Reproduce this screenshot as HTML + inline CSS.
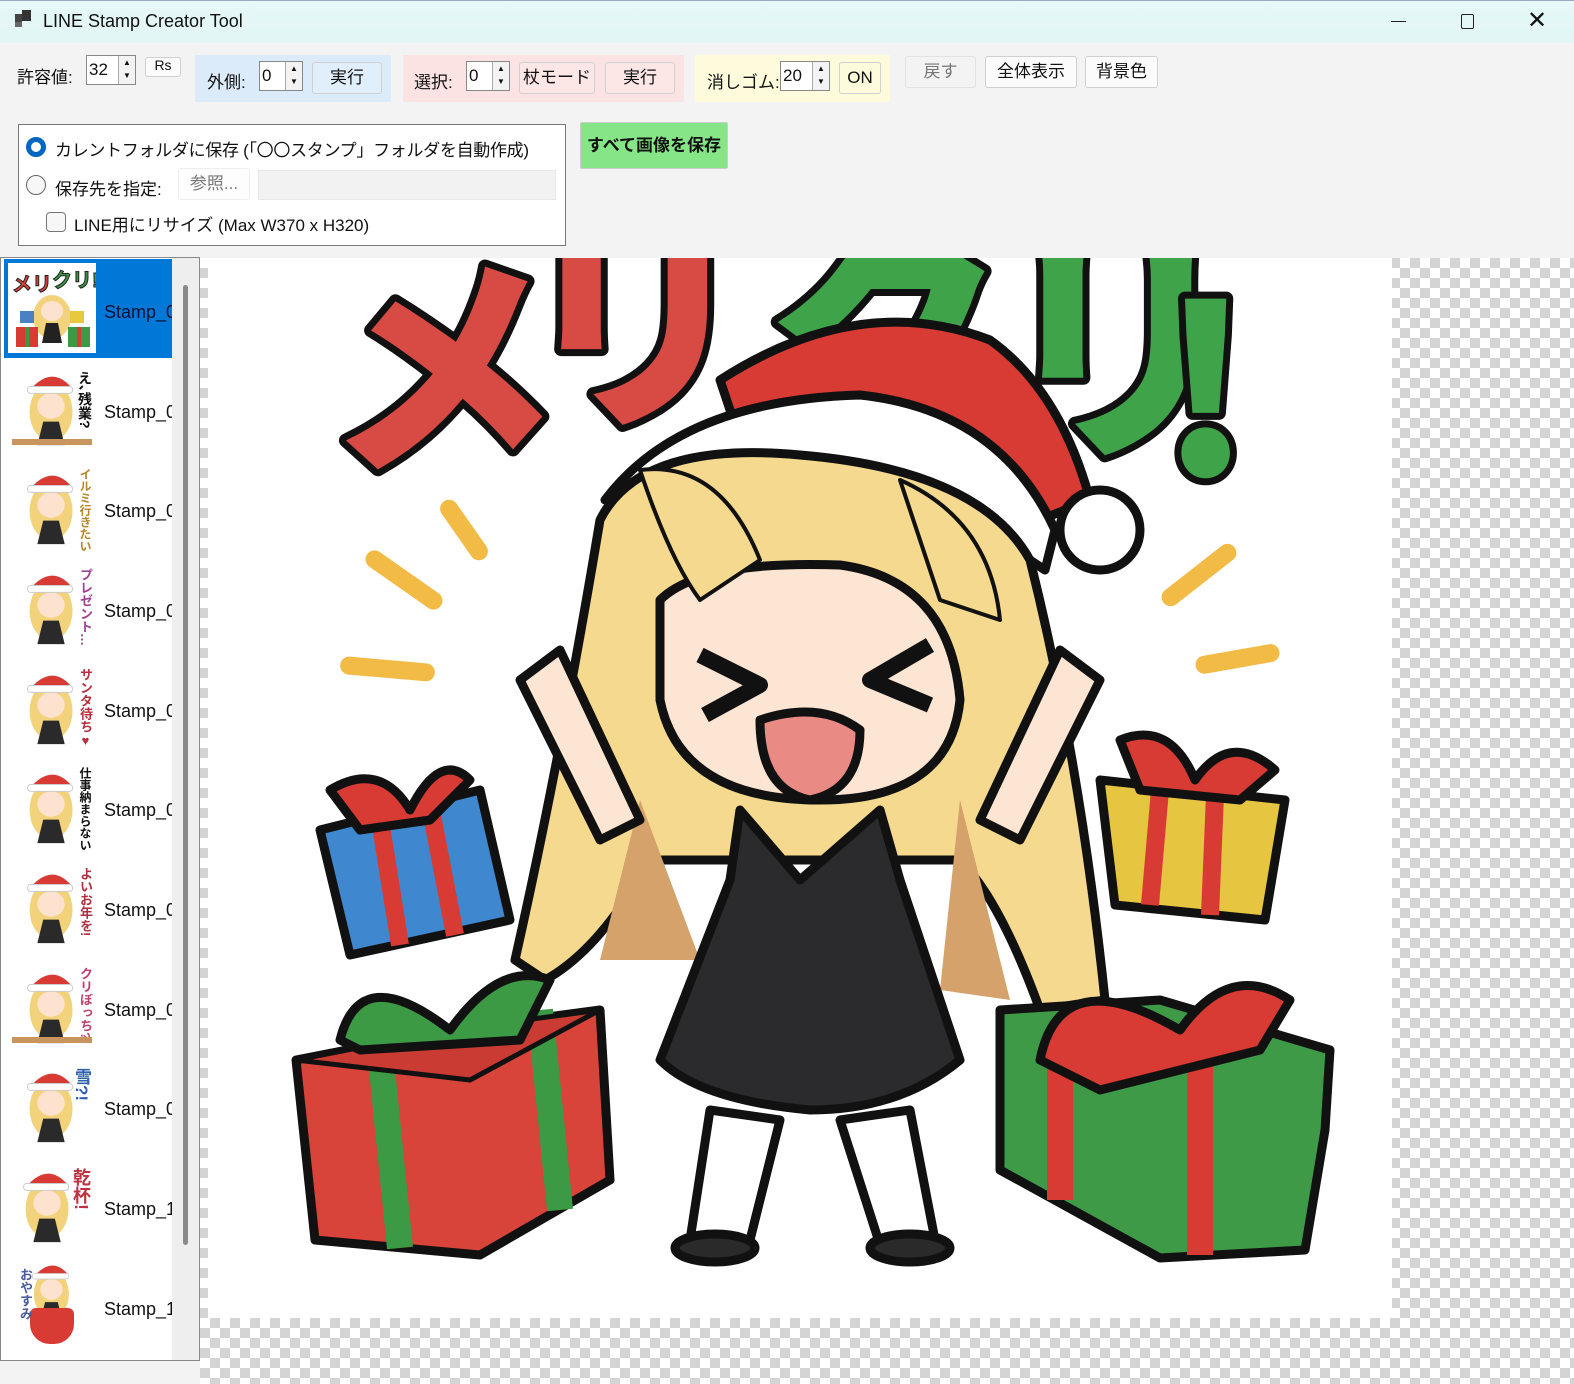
<!DOCTYPE html>
<html><head><meta charset="utf-8"><style>
*{box-sizing:border-box;margin:0;padding:0}
body{width:1574px;height:1384px;background:#f3f3f3;font-family:"Liberation Sans","Noto Sans CJK JP",sans-serif;position:relative;overflow:hidden;color:#111;font-size:17px}
.a{position:absolute}
.title{left:0;top:0;width:1574px;height:43px;background:linear-gradient(#e6f8f8,#e2f6f5);border-top:1px solid #9ab}
.btn{position:absolute;background:#fbfbfb;border:1px solid #d0d0d0;border-radius:3px;text-align:center;font-size:17px}
.num{position:absolute;background:#fff;border:1px solid #888;font-size:17px;padding-left:2px;line-height:28px}
.spin{position:absolute;right:0;top:0;width:17px;height:100%;border-left:1px solid #aaa;font-size:8px;line-height:13px;text-align:center;background:#f3f3f3}
.item{position:absolute;left:4px;width:168px;height:99px}
.item .lbl{position:absolute;left:100px;top:43px;font-size:18px;white-space:nowrap;width:68px;overflow:hidden}
.vt{position:absolute;writing-mode:vertical-rl;font-size:14px;font-weight:bold;line-height:14px}
</style></head><body>
<div class="a title"></div>
<div class="a" style="left:15px;top:14px;width:7px;height:8px;background:#444"></div>
<div class="a" style="left:22px;top:10px;width:9px;height:11px;background:#333"></div>
<div class="a" style="left:15px;top:22px;width:7px;height:5px;background:#666"></div>
<div class="a" style="left:43px;top:11px;font-size:18px">LINE Stamp Creator Tool</div>
<div class="a" style="left:1391px;top:21px;width:15px;height:1px;background:#222"></div>
<div class="a" style="left:1461px;top:14px;width:13px;height:15px;border:1.5px solid #222;border-radius:2px"></div>
<div class="a" style="left:1527px;top:6px;font-size:24px;font-weight:300">✕</div>

<div class="a" style="left:17px;top:63px">許容値:</div>
<div class="num" style="left:86px;top:55px;width:50px;height:30px">32<div class="spin">▲<br>▼</div></div>
<div class="btn" style="left:145px;top:57px;width:36px;height:20px;font-size:14px;line-height:14px;overflow:hidden">Rs</div>

<div class="a" style="left:195px;top:55px;width:196px;height:47px;background:#dcebfa"></div>
<div class="a" style="left:207px;top:68px">外側:</div>
<div class="num" style="left:259px;top:61px;width:44px;height:30px">0<div class="spin">▲<br>▼</div></div>
<div class="btn" style="left:312px;top:62px;width:70px;height:32px;line-height:30px;background:#e1effc">実行</div>

<div class="a" style="left:403px;top:55px;width:281px;height:47px;background:#fbe3e3"></div>
<div class="a" style="left:414px;top:68px">選択:</div>
<div class="num" style="left:466px;top:61px;width:44px;height:30px">0<div class="spin">▲<br>▼</div></div>
<div class="btn" style="left:519px;top:62px;width:76px;height:32px;line-height:30px;background:#fce6e6">杖モード</div>
<div class="btn" style="left:605px;top:62px;width:70px;height:32px;line-height:30px;background:#fce6e6">実行</div>

<div class="a" style="left:695px;top:55px;width:195px;height:47px;background:#fdfbdb"></div>
<div class="a" style="left:707px;top:68px">消しゴム:</div>
<div class="num" style="left:780px;top:61px;width:50px;height:30px">20<div class="spin">▲<br>▼</div></div>
<div class="btn" style="left:839px;top:62px;width:42px;height:32px;line-height:30px;background:#fdfbdc">ON</div>

<div class="btn" style="left:905px;top:56px;width:71px;height:32px;line-height:30px;background:#f3f3f3;color:#777;border-color:#e2e2e2">戻す</div>
<div class="btn" style="left:985px;top:56px;width:92px;height:32px;line-height:30px">全体表示</div>
<div class="btn" style="left:1085px;top:56px;width:73px;height:32px;line-height:30px">背景色</div>

<div class="a" style="left:18px;top:124px;width:548px;height:122px;background:#fff;border:1px solid #777"></div>
<div class="a" style="left:26px;top:137px;width:20px;height:20px;border-radius:50%;border:5px solid #0067c0;background:#fff"></div>
<div class="a" style="left:55px;top:136px;letter-spacing:-0.3px">カレントフォルダに保存 (「〇〇スタンプ」フォルダを自動作成)</div>
<div class="a" style="left:26px;top:175px;width:20px;height:20px;border-radius:50%;border:1px solid #666;background:#f7f7f7"></div>
<div class="a" style="left:55px;top:175px">保存先を指定:</div>
<div class="btn" style="left:178px;top:168px;width:72px;height:32px;line-height:30px;color:#777;border-color:#eee;background:#fdfdfd">参照...</div>
<div class="a" style="left:258px;top:170px;width:298px;height:30px;background:#f2f2f2;border:1px solid #e8e8e8"></div>
<div class="a" style="left:46px;top:212px;width:20px;height:20px;border-radius:4px;border:1px solid #777;background:#f7f7f7"></div>
<div class="a" style="left:74px;top:211px">LINE用にリサイズ (Max W370 x H320)</div>
<div class="a" style="left:580px;top:122px;width:148px;height:47px;background:#86e586;border:1px solid #ccc;border-radius:2px;font-weight:bold;text-align:center;line-height:45px">すべて画像を保存</div>

<div class="a" style="left:0;top:257px;width:200px;height:1104px;background:#fff;border:1px solid #888;overflow:hidden">
  <div class="a" style="left:171px;top:0;width:27px;height:1104px;background:#eee"></div>
  <div class="a" style="left:182px;top:27px;width:5px;height:960px;background:#8a8a8a;border-radius:3px"></div>
</div>
<svg width="0" height="0" style="position:absolute"><defs>
<symbol id="g" viewBox="0 0 88 88">
<ellipse cx="42" cy="48" rx="22" ry="30" fill="#f3d27c"/>
<ellipse cx="42" cy="42" rx="14" ry="13" fill="#fde3cf"/>
<path d="M34 58 L50 58 L56 82 L28 82Z" fill="#2a2a2a"/>
<path d="M20 26 Q42 0 62 22 Z" fill="#d83a34"/>
<rect x="18" y="22" width="46" height="7" rx="3" fill="#fff" stroke="#ccc"/>
</symbol></defs></svg>
<div class="item" style="top:259px;background:#0078d7">
  <div class="a" style="left:4px;top:4px;width:88px;height:90px;background:#fff">
   <svg width="88" height="90" viewBox="0 0 88 90">
    <text x="4" y="28" font-size="20" font-weight="bold" fill="#d6423a" stroke="#222" stroke-width="1">メリ</text>
    <text x="44" y="24" font-size="20" font-weight="bold" fill="#3c9a45" stroke="#222" stroke-width="1">クリ!</text>
    <ellipse cx="44" cy="54" rx="19" ry="22" fill="#f3d27c"/><ellipse cx="44" cy="48" rx="11" ry="10" fill="#fde3cf"/>
    <path d="M38 60 L50 60 L54 80 L34 80Z" fill="#222"/>
    <rect x="8" y="64" width="22" height="20" fill="#d83a34"/><rect x="17" y="64" width="4" height="20" fill="#3c9a45"/>
    <rect x="60" y="64" width="22" height="20" fill="#3c9a45"/><rect x="69" y="64" width="4" height="20" fill="#d83a34"/>
    <rect x="12" y="48" width="14" height="12" fill="#4a80c4"/><rect x="62" y="48" width="14" height="12" fill="#e8c83c"/>
   </svg></div>
  <div class="lbl" style="color:#113">Stamp_0</div>
</div>
<div class="item" style="top:359px"><svg class="a" style="left:6px;top:6px" width="86" height="86"><use href="#g"/></svg><div class="vt" style="left:74px;top:12px">え､残業?</div><div class="a" style="left:8px;top:80px;width:80px;height:6px;background:#c8955e"></div><div class="lbl">Stamp_0</div></div>
<div class="item" style="top:458px"><svg class="a" style="left:6px;top:6px" width="86" height="86"><use href="#g"/></svg><div class="vt" style="left:74px;top:10px;color:#b8862a;font-size:12px">イルミ行きたい</div><div class="lbl">Stamp_0</div></div>
<div class="item" style="top:558px"><svg class="a" style="left:6px;top:6px" width="86" height="86"><use href="#g"/></svg><div class="vt" style="left:74px;top:10px;color:#a04090;font-size:13px">プレゼント…</div><div class="lbl">Stamp_0</div></div>
<div class="item" style="top:658px"><svg class="a" style="left:6px;top:6px" width="86" height="86"><use href="#g"/></svg><div class="vt" style="left:74px;top:10px;color:#b83040;font-size:13px">サンタ待ち♥</div><div class="lbl">Stamp_0</div></div>
<div class="item" style="top:757px"><svg class="a" style="left:6px;top:6px" width="86" height="86"><use href="#g"/></svg><div class="vt" style="left:74px;top:10px;font-size:12px">仕事納まらない</div><div class="lbl">Stamp_0</div></div>
<div class="item" style="top:857px"><svg class="a" style="left:6px;top:6px" width="86" height="86"><use href="#g"/></svg><div class="vt" style="left:74px;top:10px;color:#b03040;font-size:13px">よいお年を!</div><div class="lbl">Stamp_0</div></div>
<div class="item" style="top:957px"><svg class="a" style="left:6px;top:6px" width="86" height="86"><use href="#g"/></svg><div class="vt" style="left:74px;top:10px;color:#c04070;font-size:13px">クリぼっち?</div><div class="a" style="left:8px;top:80px;width:80px;height:6px;background:#c8955e"></div><div class="lbl">Stamp_0</div></div>
<div class="item" style="top:1056px"><svg class="a" style="left:6px;top:6px" width="86" height="86"><use href="#g"/></svg><div class="vt" style="left:70px;top:12px;color:#3060b0;font-size:17px">雪?!</div><div class="lbl">Stamp_0</div></div>
<div class="item" style="top:1156px"><svg class="a" style="left:2px;top:6px" width="86" height="86"><use href="#g"/></svg><div class="vt" style="left:70px;top:12px;color:#c03040;font-size:18px">乾杯!</div><div class="lbl">Stamp_1</div></div>
<div class="item" style="top:1256px"><svg class="a" style="left:14px;top:0px" width="70" height="70"><use href="#g"/></svg><div class="a" style="left:26px;top:52px;width:44px;height:36px;background:#d83a34;border-radius:6px 6px 20px 20px"></div><div class="vt" style="left:14px;top:12px;color:#4a5aa0;font-size:13px">おやすみ</div><div class="lbl">Stamp_1</div></div>

<div class="a" style="left:200px;top:258px;width:1374px;height:1126px;background-color:#fff;background-image:repeating-conic-gradient(#d4d4d4 0 25%,#fff 0 50%);background-size:20px 20px;background-position:0 0"></div>
<svg class="a" style="left:0;top:0" width="1574" height="1384" viewBox="0 0 1574 1384">
<defs><clipPath id="c"><rect x="208" y="258" width="1184" height="1060"/></clipPath></defs>
<rect x="208" y="258" width="1184" height="1060" fill="#fff"/>
<g clip-path="url(#c)" stroke="#111" stroke-width="9" stroke-linejoin="round">
 <g font-family="'Noto Sans CJK JP',sans-serif" font-weight="900" paint-order="stroke" stroke-width="14">
  <text x="325" y="455" font-size="235" fill="#d84a44">メ</text>
  <text x="520" y="410" font-size="230" fill="#d84a44">リ</text>
  <text x="765" y="420" font-size="240" fill="#3fa34a">ク</text>
  <text x="1000" y="440" font-size="235" fill="#3fa34a">リ</text>
  <text x="1160" y="475" font-size="230" fill="#3fa34a">!</text>
 </g>
 <path d="M720 380 Q860 290 990 340 Q1060 390 1090 500 L1040 520 Q900 420 740 440Z" fill="#d83a34"/>
 <path d="M605 500 Q680 400 860 395 Q1000 410 1055 530 L1045 570 Q900 470 720 480 Q640 490 605 500Z" fill="#fff"/>
 <circle cx="1100" cy="530" r="40" fill="#fff"/>
 <path d="M600 520 Q640 440 800 455 Q980 470 1030 560 Q1080 760 1105 1000 L1040 1010 Q1000 900 960 860 L650 860 Q600 950 545 980 L515 960 Q560 760 600 520Z" fill="#f4d98e"/>
 <path d="M640 800 L600 960 L700 960 Z M960 800 L1010 1000 L940 990Z" fill="#d4a26a" stroke="none"/>
 <path d="M520 680 L560 650 L640 820 L600 840Z" fill="#fde5d3"/>
 <path d="M1100 680 L1060 650 L980 820 L1020 840Z" fill="#fde5d3"/>
 <path d="M660 600 Q700 560 840 565 Q950 580 960 700 Q950 800 820 800 Q680 800 660 700Z" fill="#fde5d3"/>
 <path d="M700 655 L760 685 L705 715 M930 645 L870 680 L930 705" fill="none" stroke-width="16"/>
 <path d="M760 720 Q820 700 860 730 Q860 790 810 800 Q760 790 760 720Z" fill="#ea8a84"/>
 <path d="M640 470 Q720 460 760 560 L700 600 Q670 560 640 470Z M900 480 Q990 520 1000 620 L940 600 Z" fill="#f4d98e" stroke-width="4"/>
 <path d="M740 810 L800 880 L880 810 L900 880 L960 1060 Q900 1110 810 1110 Q700 1100 660 1060 L730 880Z" fill="#2b2b2d"/>
 <path d="M710 1110 L780 1120 L750 1240 L690 1240Z" fill="#fff"/>
 <path d="M840 1120 L910 1110 L935 1240 L880 1245Z" fill="#fff"/>
 <ellipse cx="715" cy="1248" rx="40" ry="14" fill="#2a2a2a"/>
 <ellipse cx="910" cy="1248" rx="40" ry="14" fill="#2a2a2a"/>
 <path d="M320 830 L480 790 L510 920 L350 955Z" fill="#3f88cf"/>
 <path d="M380 820 L400 945 M430 805 L455 935" stroke="#d83a34" stroke-width="18"/>
 <path d="M330 790 Q380 760 410 810 Q440 750 470 780 L430 820 L360 830Z" fill="#d83a34"/>
 <path d="M1100 780 L1285 800 L1265 920 L1115 905Z" fill="#e6c640"/>
 <path d="M1160 790 L1150 905 M1215 795 L1210 915" stroke="#d83a34" stroke-width="18"/>
 <path d="M1120 740 Q1170 720 1195 780 Q1230 730 1275 770 L1240 800 L1140 790Z" fill="#d83a34"/>
 <path d="M296 1060 L450 1030 L600 1010 L610 1180 L480 1255 L315 1240Z" fill="#d8433a"/>
 <path d="M380 1050 L400 1248 M540 1010 L560 1210" stroke="#3c9a45" stroke-width="26"/>
 <path d="M296 1060 L450 1030 L600 1010 L470 1080 Z" fill="#c93b33" stroke-width="5"/>
 <path d="M340 1040 Q360 960 450 1030 Q500 960 550 980 L520 1040 L360 1050Z" fill="#3c9a45"/>
 <path d="M1000 1010 L1160 1000 L1330 1050 L1325 1130 L1305 1250 L1160 1258 L1000 1170Z" fill="#3e9a47"/>
 <path d="M1060 1030 L1060 1200 M1200 1040 L1200 1255" stroke="#d83a34" stroke-width="26"/>
 <path d="M1040 1060 Q1060 960 1180 1030 Q1230 960 1290 1000 L1260 1050 L1180 1070 L1100 1090Z" fill="#d83a34"/>
</g>
<g fill="#f2bb46">
 <rect x="455" y="495" width="18" height="70" rx="9" transform="rotate(-35 464 530)"/>
 <rect x="395" y="535" width="18" height="90" rx="9" transform="rotate(-55 404 580)"/>
 <rect x="340" y="660" width="95" height="18" rx="9" transform="rotate(5 388 669)"/>
 <rect x="1190" y="530" width="18" height="90" rx="9" transform="rotate(52 1199 575)"/>
 <rect x="1195" y="650" width="85" height="18" rx="9" transform="rotate(-10 1237 659)"/>
</g>
</svg>
</body></html>
